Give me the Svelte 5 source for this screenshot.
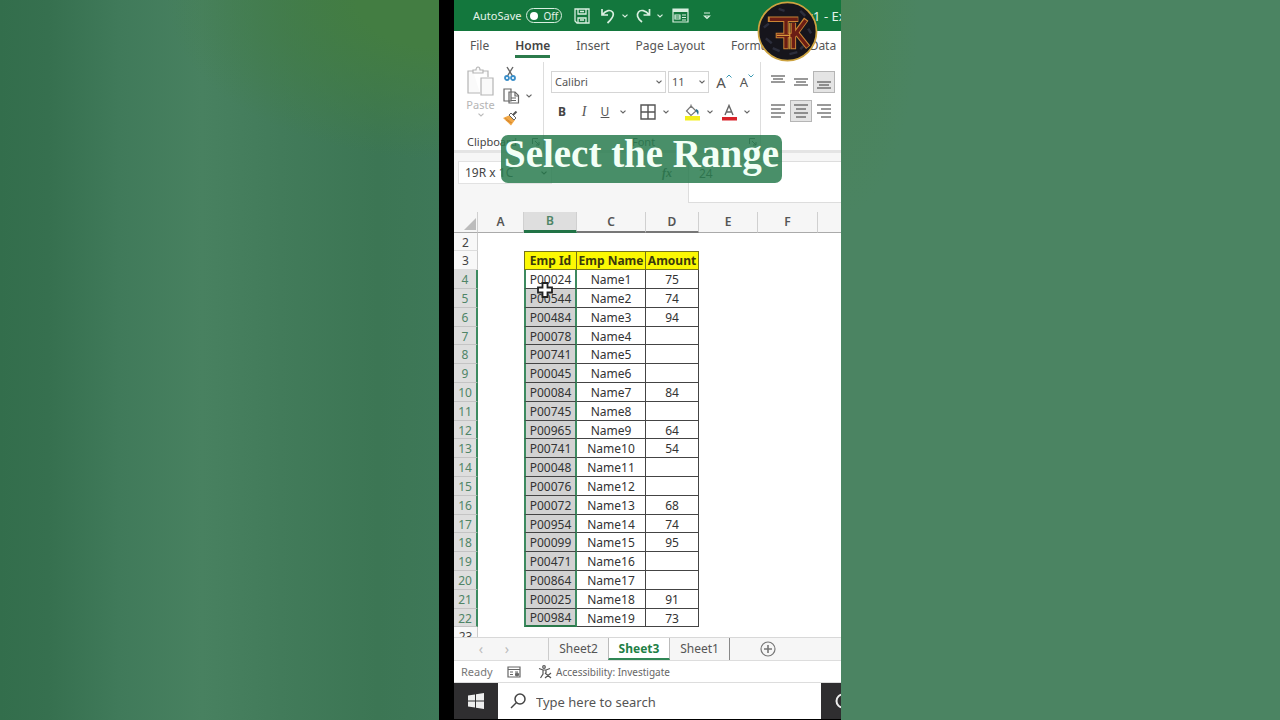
<script>
  const ids = ['P00024', 'P00544', 'P00484', 'P00078', 'P00741', 'P00045', 'P00084', 'P00745', 'P00965', 'P00741', 'P00048', 'P00076', 'P00072', 'P00954', 'P00099', 'P00471', 'P00864', 'P00025', 'P00984'];
  const amounts = [75, 74, 94, '', '', '', 84, '', 64, 54, '', '', 68, 74, 95, '', '', 91, 73];
  const records = ids.map((id, i) => ({ row: i + 4, id, name: `Name${i + 1}`, amount: amounts[i] }));
  const columns = ['A', 'B', 'C', 'D', 'E', 'F', ''];
  const menus = ['File', 'Home', 'Insert', 'Page Layout', 'Formulas', 'Data'];
</script>

{#snippet chevron(color = '#666')}
  <svg class="chev" viewBox="0 0 6 4" aria-hidden="true"><path d="M.5.6 3 3 5.500.6" fill="none" stroke={color} stroke-width="1.2" /></svg>
{/snippet}

{#snippet lines(rows, label, on = false)}
  <button class="align" class:on aria-label={label}>
    <svg width="14" height="16" viewBox="0 0 14 16">
      {#each rows as [x, y, w]}<path d="M{x} {y}h{w}" stroke="#555" stroke-width="1.2" />{/each}
    </svg>
  </button>
{/snippet}

{#snippet launcher()}
  <svg class="launch" width="8" height="8" viewBox="0 0 8 8" aria-hidden="true"><path d="M.5 6V.5H6M3 3l4 4M7 4v3H4" fill="none" stroke="#555" /></svg>
{/snippet}

<div class="stage">
  <div class="side left"></div>
  <main class="phone">
    <div class="app">
      <header class="title">
        <label class="auto">AutoSave
          <input type="checkbox" role="switch" />
          <span class="toggle"><i></i>Off</span>
        </label>
        <button aria-label="Save" class="save">
          <svg width="16" height="16" viewBox="0 0 16 16" fill="none" stroke="#d9efe0" stroke-width="1.3"><path d="M1 1h14v14H3l-2-2zM4 1v5h8V1M4 15v-5h8v5M6 12h4M6 3.500h4" /></svg>
        </button>
        <button aria-label="Undo" class="undo">
          <svg width="16" height="16" viewBox="0 0 16 16" fill="none" stroke="#d9efe0" stroke-width="1.7"><path d="M2 1v6h6M2.500 6.500C6 2 10.500 1.500 12.500 4s1 5.500-5 11" /></svg>
          {@render chevron('#d9efe0')}
        </button>
        <button aria-label="Redo" class="redo">
          <svg width="16" height="16" viewBox="0 0 16 16" fill="none" stroke="#d9efe0" stroke-width="1.7"><path d="M14.500 1v6h-6M14 6.500C10.500 2 5.500 1.500 3.500 4S2 10 7 14" /></svg>
          {@render chevron('#d9efe0')}
        </button>
        <button aria-label="Form" class="form">
          <svg width="17" height="15" viewBox="0 0 17 15" fill="none" stroke="#d9efe0" stroke-width="1.2"><path d="M1 1h15v13H1z" /><path d="M1 2.500h15" stroke-width="3" /><path d="M3 7h5v4H3zM10 7h4M10 9.500h4M10 12h4M3 9h5" /></svg>
        </button>
        <button aria-label="Customize Quick Access Toolbar" class="more">
          <svg width="8" height="8" viewBox="0 0 8 8" fill="none" stroke="#d9efe0" stroke-width="1.2"><path d="M1 1h6M1.500 4 4 6.500 6.500 4z" /></svg>
        </button>
        <span class="doc">Book1 - Excel</span>
      </header>

      <nav class="menu">
        {#each menus as m}<button class:active={m === 'Home'}>{m}</button>{/each}
      </nav>

      <section class="ribbon">
        <div class="group clip">
          <div class="tools">
            <button class="paste">
              <svg width="27" height="31" viewBox="0 0 27 31" fill="#fafafa" stroke="#b5b5b5" stroke-width="1.2"><path d="M13 27H1V5h5M16 5h5v6M6 7V4h3c0-4 4-4 4 0h3v3z" /><path d="M14 12h12v17H14z" /></svg>
              <span>Paste</span>
              {@render chevron('#bbb')}
            </button>
            <div class="edits">
              <button aria-label="Cut">
                <svg width="14" height="16" viewBox="0 0 14 16" fill="none" stroke-width="1.4"><path d="M4 1l5.500 9M10 1 4.500 10" stroke="#666" /><g stroke="#3b8fc9" stroke-width="1.800"><circle cx="4" cy="12" r="2" /><circle cx="10" cy="12" r="2" /></g></svg>
              </button>
              <button aria-label="Copy">
                <svg width="17" height="16" viewBox="0 0 17 16" fill="#fff" stroke="#666" stroke-width="1.2"><path d="M1 1h7v12H1zM6 4h6l3.500 3.500V15H6z" /><path d="M12 4v4h3.500M8 10h5M8 12.500h5" fill="none" /></svg>
                {@render chevron()}
              </button>
              <button aria-label="Format Painter">
                <svg width="15" height="15" viewBox="0 0 15 15"><path d="M0 7 7 4l5 5-4 5.500z" fill="#f0a848" /><path d="M3 9l5 3M2 7l7 5" stroke="#d78427" stroke-width=".8" /><path d="m6 4 2-2 5 5-2 2z" fill="#fff" stroke="#666" /><path d="m10 4 3.500-3.500" stroke="#555" stroke-width="2" /></svg>
              </button>
            </div>
          </div>
          <div class="caption"><span>Clipboard</span>{@render launcher()}</div>
        </div>

        <div class="group font">
          <div class="fonts">
            <div class="pick name"><select aria-label="Font"><option>Calibri</option></select>{@render chevron()}</div>
            <div class="pick size"><select aria-label="Font size"><option>11</option></select>{@render chevron()}</div>
            <button class="grow" aria-label="Increase font size"><span>A</span><svg width="6" height="4" viewBox="0 0 6 4"><path d="M.5 3.500 3 1l2.500 2.500" fill="none" stroke="#3b9ab5" /></svg></button>
            <button class="grow small" aria-label="Decrease font size"><span>A</span><svg width="6" height="4" viewBox="0 0 6 4"><path d="M.5.500 3 3 5.500.5" fill="none" stroke="#3b9ab5" /></svg></button>
          </div>
          <div class="styles">
            <button class="b">B</button>
            <button class="i">I</button>
            <button class="drop"><u>U</u>{@render chevron()}</button>
            <button class="drop" aria-label="Borders"><svg width="16" height="16" viewBox="0 0 16 16" fill="none" stroke="#555" stroke-width="1.4"><path d="M1 1h14v14H1zM8 1v14M1 8h14" /></svg>{@render chevron()}</button>
            <button class="drop fill" aria-label="Fill color"><svg width="16" height="17" viewBox="0 0 16 17"><path d="M1 12h15v4.500H1z" fill="#f3ee1c" /><path d="m7 2 5 5-5 4.500L2.500 7zM7 4V.5" fill="#fff" stroke="#777" stroke-width="1.2" /><path d="M12 5c3 1 3 3 2 6-1-2-1-3-2.500-4z" fill="#2d7189" /></svg>{@render chevron()}</button>
            <button class="drop" aria-label="Font color"><svg width="16" height="17" viewBox="0 0 16 17"><path d="M1 13h15v3.500H1z" fill="#d8232a" /><path d="m4 11 4-9.500L12 11M5.500 8h5" fill="none" stroke="#666" stroke-width="1.4" /></svg>{@render chevron()}</button>
          </div>
          <div class="caption mid"><span>Font</span>{@render launcher()}</div>
        </div>

        <div class="group aligns">
          {@render lines([[0, 2, 14], [2, 5, 10], [0, 8, 14]], 'Top align')}
          {@render lines([[0, 5, 14], [2, 8, 10], [0, 11, 14]], 'Middle align')}
          {@render lines([[0, 8, 14], [2, 11, 10], [0, 14, 14]], 'Bottom align', true)}
          {@render lines([[0, 2, 14], [0, 6, 10], [0, 10, 14], [0, 14, 10]], 'Align left')}
          {@render lines([[0, 2, 14], [2, 6, 10], [0, 10, 14], [2, 14, 10]], 'Center', true)}
          {@render lines([[0, 2, 14], [4, 6, 10], [0, 10, 14], [4, 14, 10]], 'Align right')}
        </div>
      </section>

      <section class="formula">
        <div class="namebox"><input aria-label="Name box" value="19R x 1C" />{@render chevron('#333')}</div>
        <span class="fx">fx</span>
        <input class="value" aria-label="Formula bar" value="24" />
      </section>

      <section class="sheet">
        <table>
          <colgroup><col class="c0" /><col class="ca" /><col class="cb" /><col class="cc" /><col class="cd" /><col class="ce" /><col class="cf" /><col class="cf" /></colgroup>
          <thead>
            <tr>
              <th class="corner"><svg width="12" height="12" viewBox="0 0 12 12" aria-hidden="true"><path d="M12 0v12H0z" fill="#bcbcbc" /></svg></th>
              {#each columns as c}<th class:sel={c === 'B'} class:used={c === 'C' || c === 'D'}>{c}</th>{/each}
            </tr>
          </thead>
          <tbody>
            <tr class="short"><th>2</th><td colspan="7"></td></tr>
            <tr class="names"><th>3</th><td></td><td class="h">Emp Id</td><td class="h">Emp Name</td><td class="h">Amount</td><td colspan="3"></td></tr>
            {#each records as r, i}
              <tr class:short={i % 5 === 3}>
                <th class="on">{r.row}</th><td></td>
                <td class="id" class:first={i === 0} class:last={i === 18}>{r.id}</td>
                <td class="d">{r.name}</td><td class="d">{r.amount}</td><td colspan="3"></td>
              </tr>
            {/each}
            <tr><th>23</th><td colspan="7"></td></tr>
          </tbody>
        </table>
        <svg class="cursor" width="18" height="18" viewBox="0 0 18 18" aria-hidden="true"><path d="M6.500 2h5v4.500H16v5h-4.500V16h-5v-4.500H2v-5h4.500z" fill="#fff" stroke="#222" stroke-width="1.8" /></svg>
      </section>

      <nav class="tabs">
        <button class="arrow" aria-label="Previous sheet">‹</button>
        <button class="arrow" aria-label="Next sheet">›</button>
        <button class="tab lead">Sheet2</button>
        <button class="tab current">Sheet3</button>
        <button class="tab end">Sheet1</button>
        <button class="add" aria-label="New sheet"><svg width="16" height="16" viewBox="0 0 16 16" fill="none" stroke="#777" stroke-width="1.2"><circle cx="8" cy="8" r="7" /><path d="M8 4v8M4 8h8" stroke-width="1.6" /></svg></button>
      </nav>

      <footer class="status">
        <span class="ready">Ready</span>
        <svg width="14" height="12" viewBox="0 0 14 12" fill="none" stroke="#666" stroke-width="1.2"><path d="M1 1h12v10H1zM1 3.500h12M3 6h3M3 8.500h3M8 6h3" /><circle cx="10" cy="8.500" r="1.500" fill="#666" /></svg>
        <svg class="acc" width="14" height="14" viewBox="0 0 14 14" fill="none" stroke="#555" stroke-width="1.2"><circle cx="6" cy="2" r="1.300" /><path d="M1 3.500 5 5h3l4-1.500M5 5v4l-2.500 4M8 5v3M7 8l6 5M13 8l-6 5" /></svg>
        <span class="check">Accessibility: Investigate</span>
      </footer>

      <footer class="task">
        <button class="start" aria-label="Start"><svg width="16" height="16" viewBox="0 0 16 16" fill="#eee"><path d="M0 2.500 7 1.500v6H0zM8 1.300 16 0v7.500H8zM0 8.500h7v6l-7-1zM8 8.500h8V16l-8-1.300z" /></svg></button>
        <label class="search">
          <svg width="16" height="16" viewBox="0 0 16 16" fill="none" stroke="#444" stroke-width="1.500" aria-hidden="true"><circle cx="10" cy="6" r="5" /><path d="M6.500 9.500 1 15" /></svg>
          <input aria-label="Search" placeholder="Type here to search" />
        </label>
        <button class="cortana" aria-label="Cortana"><svg width="16" height="16" viewBox="0 0 16 16"><circle cx="8" cy="8" r="6.500" fill="none" stroke="#eee" stroke-width="2" /></svg></button>
      </footer>
    </div>

    <div class="banner">Select the Range</div>
    <svg class="logo" viewBox="0 0 62 62" role="img" aria-label="Channel logo">
      <circle cx="31" cy="31" r="29.500" fill="#16151c" stroke="#cda340" stroke-width="1.800" />
      <path d="M7 27l5-4M9 38l6 5M44 10l5 5M22 8l6 2M50 43l-6 6M16 48l7 3M33 54l8-2M52 28l3 5" stroke="#2c2e3c" stroke-width="2.500" />
      <g fill="none">
        <g stroke="#c98535" stroke-width="5.500"><path d="M11 18.500h31M29.500 18v31M19 35h20M37 22v27M38 35l12-16.500M40 32l12 15" /></g>
        <g stroke="#6b1d14" stroke-width="3.500"><path d="M13 18.500h28.500M29.500 18v30M20 35h18M37 22v26M38 35l11.500-15.500M40 32l11.500 14.500" /></g>
        <path d="M33.300 22v27M20 35h13" stroke="#d99b3c" stroke-width="1.200" />
      </g>
    </svg>
  </main>
  <div class="side right"></div>
</div>

<style>
  :global(body) { margin: 0; background: #4b8462; }
  .stage { display: grid; grid-template-columns: 1fr minmax(402px, 31vw) 1fr; height: 100vh; min-height: 480px; font-family: 'Noto Sans', sans-serif; font-size: 12px; line-height: 16px; color: #555; }
  .left { background: radial-gradient(ellipse 62% 22% at 100% 0, #437d42 30%, transparent), linear-gradient(90deg, #336e4c 0, #36704f 11%, #407a5a 27%, #488160 46%, #427b5a 64%, #3c7654 86%, #3e7858 100%); }
  .right { background: radial-gradient(ellipse 18% 30% at 0 0, #4a8356, transparent), #4b8462; }
  .phone { position: relative; box-sizing: border-box; min-width: 0; height: 100%; overflow: hidden; background: #000; padding: 0 0 1px 15px; }
  .app { display: flex; flex-direction: column; height: 100%; overflow: hidden; background: #fff; }
  button, input, select { font: inherit; color: inherit; border: 0; background: none; padding: 0; margin: 0; border-radius: 0; outline: 0; min-width: 0; }
  button { display: flex; align-items: center; justify-content: center; flex: none; }
  svg { flex: none; display: block; }
  .chev { width: 6px; height: 4px; }

  .title { display: flex; align-items: center; flex: none; height: 31px; background: #13773d; color: #e4f3e9; padding-left: 19px; white-space: nowrap; overflow: hidden; font-size: 11px; }
  .auto { display: flex; align-items: center; gap: 5px; position: relative; width: 90px; flex: none; }
  .auto input { position: absolute; opacity: 0; }
  .toggle { display: flex; align-items: center; gap: 5px; box-sizing: border-box; width: 36px; height: 15px; border: 1px solid #d9efe0; border-radius: 8px; padding-left: 3px; font-size: 10px; }
  .toggle i { width: 8px; height: 8px; border-radius: 50%; background: #fff; }
  .save { margin-left: 11px; }
  .undo, .redo { gap: 6px; margin-left: 11px; width: 26px; }
  .redo { margin-left: 9px; }
  .form { margin-left: 10px; }
  .more { margin-left: 14px; }
  .doc { margin-left: 71px; font-size: 13px; }

  .menu { display: flex; flex: none; height: 31px; padding-left: 16px; gap: 26px; overflow: hidden; }
  .menu button { height: 27px; padding-top: 6px; box-sizing: border-box; border-bottom: 3px solid transparent; }
  .menu .active { font-weight: 600; color: #444; border-color: #2b7a4b; }

  .ribbon { display: flex; flex: none; height: 88px; box-sizing: border-box; overflow: hidden; }
  .group { box-sizing: border-box; flex: none; border-right: 1px solid #ddd; padding-top: 4px; }
  .clip { width: 90px; }
  .tools { display: flex; height: 68px; padding-left: 13px; gap: 9px; }
  .paste { flex-direction: column; width: 27px; color: #b5b5b5; font-size: 11px; justify-content: flex-start; }
  .edits { display: flex; flex-direction: column; gap: 6px; align-items: flex-start; }
  .edits button { height: 16px; gap: 6px; }
  .caption { display: flex; align-items: center; justify-content: space-between; padding: 0 3px 0 13px; height: 16px; font-size: 11px; color: #444; }
  .mid { padding-left: 88px; }
  .font { width: 217px; }
  .fonts { display: flex; align-items: center; height: 32px; padding-left: 7px; }
  .pick { display: flex; align-items: center; box-sizing: border-box; height: 22px; border: 1px solid #d5d5d5; padding: 0 3px; }
  .pick select { appearance: none; flex: 1; font-size: 11px; }
  .name { width: 115px; margin-right: 2px; }
  .size { width: 41px; }
  .grow { align-items: flex-start; margin-left: 5px; font-size: 15px; width: 20px; }
  .small { font-size: 13px; margin-left: 3px; }
  .styles { display: flex; align-items: center; height: 36px; padding-left: 8px; box-sizing: border-box; padding-bottom: 8px; }
  .styles button { height: 20px; }
  .b { font-weight: 700; width: 20px; color: #444; }
  .i { font-family: 'Liberation Serif', serif; font-style: italic; font-size: 14px; width: 24px; }
  .drop { gap: 7px; margin: 0 3px 0 1px; }
  .drop u { width: 16px; text-align: center; }
  .styles .drop + .drop { margin-left: 11px; }
  .styles .drop + .fill { margin-left: 12px; }
  .styles .fill + .drop { margin-left: 5px; }
  .aligns { display: grid; grid-template-columns: repeat(3, 22px); grid-auto-rows: 22px; gap: 7px 1px; padding: 9px 0 0 6px; border: 0; }
  .align { border: 1px solid transparent; }
  .align.on { background: #e4e4e4; border-color: #b5b5b5; }

  .formula { display: flex; align-items: flex-start; flex: none; height: 62px; box-sizing: border-box; background: #f6f6f6; border-top: 3px solid #e4e4e4; padding: 8px 0 0 4px; color: #444; }
  .namebox { display: flex; align-items: center; box-sizing: border-box; width: 94px; height: 23px; background: #fff; border: 1px solid #e2e2e2; padding: 0 4px 0 6px; flex: none; }
  .namebox input { flex: 1; }
  .fx { font-family: 'Liberation Serif', serif; font-style: italic; font-weight: 700; width: 26px; padding: 4px 0 0 110px; flex: none; }
  .value { box-sizing: border-box; flex: 1; height: 42px; background: #fff; border: 1px solid #ddd; border-right: 0; padding: 0 0 18px 10px; }

  .sheet { position: relative; flex: 1; min-height: 0; overflow: hidden; }
  table { table-layout: fixed; width: 424px; border-collapse: separate; border-spacing: 0; line-height: 14px; text-align: center; }
  .c0 { width: 24px; } .ca { width: 46px; } .cb { width: 53px; } .cc { width: 69px; } .cd { width: 53px; } .ce { width: 59px; } .cf { width: 60px; }
  th, td { box-sizing: border-box; height: 19px; padding: 2px 0 0; white-space: nowrap; overflow: hidden; }
  .short th, .short td { height: 18px; }
  thead th { height: 21px; padding: 0; background: #f6f6f6; font-weight: 600; border-right: 1px solid #d0d0d0; border-bottom: 1px solid #aaa; }
  thead .sel { background: #dedede; color: #4f8567; border-bottom: 3px solid #217346; }
  thead .used { border-bottom: 2px solid #777; }
  .corner svg { margin: 3px 1px 0 auto; }
  tbody th { font-weight: 400; background: #f8f8f8; border-right: 1px solid #ccc; border-bottom: 1px solid #ddd; color: #444; }
  tbody .on { background: #dedede; color: #4f8567; border-right: 2px solid #3d8a60; border-bottom-color: #c4c4c4; }
  tbody td { color: #333; }
  .h { background: #fcf803; font-weight: 700; border: 1px solid #77751a; border-left-width: 0; color: #3b3a0c; padding-top: 1px; }
  .h:nth-child(3) { border-left-width: 1px; }
  .d { border: solid #444; border-width: 0 1px 1px 0; }
  .id { background: #d2d2d2; border: solid #3d8a60; border-width: 0 2px 1px; border-bottom-color: #444; }
  .id.first { background: #fff; }
  .last { border-bottom: 2px solid #2b7a4b; }
  .cursor { position: absolute; left: 82px; top: 69px; }

  .tabs { display: flex; flex: none; height: 24px; box-sizing: border-box; background: #f6f6f6; border-top: 1px solid #d8d8d8; border-bottom: 1px solid #ddd; padding-left: 14px; }
  .arrow { width: 26px; color: #bbb; font-size: 14px; }
  .tab { width: 60px; height: 22px; box-sizing: border-box; }
  .lead { border-left: 1px solid #ccc; margin-left: 28px; }
  .current { background: #fff; color: #1f7f46; font-weight: 700; border: solid #bbb; border-width: 0 1px 2px; border-bottom-color: #2f8655; width: 62px; padding-top: 2px; }
  .end { border-right: 1px solid #888; }
  .add { margin-left: 30px; }

  .status { display: flex; align-items: center; flex: none; height: 22px; padding-left: 7px; font-size: 11px; color: #777; white-space: nowrap; box-sizing: border-box; border-bottom: 1px solid #ddd; padding-top: 1px; }
  .ready { width: 46px; }
  .acc { margin: 0 4px 0 17px; }
  .check { font-size: 10px; color: #666; }
  .task { display: flex; flex: none; height: 36px; background: #2f2e30; }
  .start { width: 44px; }
  .search { display: flex; align-items: center; flex: 1; min-width: 0; background: #fff; padding-left: 12px; gap: 10px; }
  .search input { flex: 1; font-size: 13px; padding-top: 2px; }
  .search input::placeholder { color: #555; opacity: 1; }
  .cortana { width: 20px; justify-content: flex-start; padding-left: 14px; box-sizing: border-box; overflow: hidden; }

  .banner { position: absolute; top: 135px; left: 62px; right: 59px; height: 48px; border-radius: 7px; background: rgba(43, 125, 80, .86); color: #f2fff6; font: 700 39px/38px 'Liberation Serif', serif; text-align: center; white-space: nowrap; }
  .logo { position: absolute; top: 1px; right: 23px; width: 61px; height: 61px; }
</style>
